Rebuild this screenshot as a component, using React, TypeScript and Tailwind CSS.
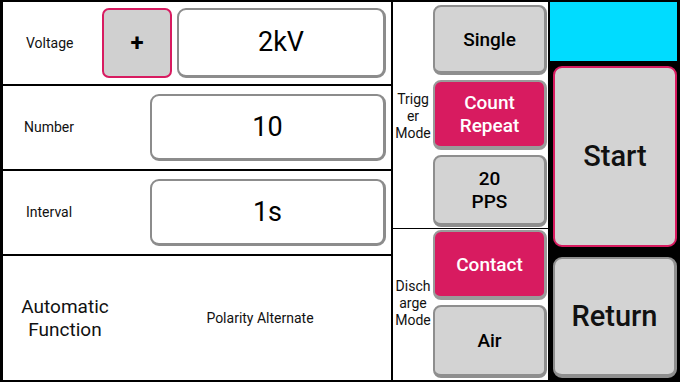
import React from 'react';

const font = { fontFamily: 'Roboto, "Noto Sans", sans-serif' };

function ValueBox({ value }: { value: string }) {
    return (
        <div className="flex-1 h-full flex items-center justify-center rounded-[9px] border-2 border-[#8c8c8c] border-b-[3px] border-r-[3px] bg-white text-[27px] text-black">
            {value}
        </div>
    );
}

function ModeButton({ label, active = false, className = '' }: { label: React.ReactNode; active?: boolean; className?: string }) {
    return (
        <div
            className={`flex items-center justify-center text-center rounded-[8px] border-2 border-b-[4px] border-r-[3px] text-[19px] font-medium leading-[23px] ${
                active ? 'bg-[#d81b60] text-white border-[#9a9a9a]' : 'bg-[#d3d3d3] text-black border-[#8e8e8e]'
            } ${className}`}
        >
            {label}
        </div>
    );
}

export default function App() {
    return (
        <div className="w-[680px] h-[382px] bg-black flex overflow-hidden" style={font}>
            {/* Settings panel */}
            <div className="w-[392px] h-full pl-[3px] pr-[1px] py-[2px] flex flex-col gap-[2px]">
                <div className="h-[82px] bg-white flex items-center pl-[23px] pr-[5px] py-[6px]">
                    <span className="w-[76px] text-[14px] text-[#111]">Voltage</span>
                    <div className="w-[70px] h-full flex items-center justify-center rounded-[7px] border-2 border-[#d81b60] bg-[#d0d0d0] text-[24px] font-bold text-black">
                        +
                    </div>
                    <div className="w-[5px]" />
                    <ValueBox value="2kV" />
                </div>
                <div className="h-[83px] bg-white flex items-center pl-[21px] pr-[5px] py-[8px]">
                    <span className="w-[126px] text-[14px] text-[#111]">Number</span>
                    <ValueBox value="10" />
                </div>
                <div className="h-[83px] bg-white flex items-center pl-[23px] pr-[5px] py-[8px]">
                    <span className="w-[124px] text-[14px] text-[#111]">Interval</span>
                    <ValueBox value="1s" />
                </div>
                <div className="flex-1 bg-white flex items-center">
                    <div className="w-[124px] text-center text-[19px] leading-[23px] text-[#111]">
                        Automatic
                        <br />
                        Function
                    </div>
                    <div className="flex-1 text-center text-[14px] text-[#111] pl-[2px]">Polarity Alternate</div>
                </div>
            </div>

            {/* Mode column */}
            <div className="w-[156px] h-full bg-white border-l border-black flex flex-col py-[2px] border-y-2 border-y-black">
                <div className="h-[225px] flex border-b border-black">
                    <div className="w-[40px] flex items-center justify-center text-center text-[14px] leading-[17px] text-[#111]">
                        Trigg
                        <br />
                        er
                        <br />
                        Mode
                    </div>
                    <div className="flex-1 flex flex-col gap-[5px] pt-[1px] pr-[1px] pb-[1px]">
                        <ModeButton label="Single" className="h-[70px]" />
                        <ModeButton label={<>Count<br />Repeat</>} active className="h-[70px]" />
                        <ModeButton label={<>20<br />PPS</>} className="flex-1" />
                    </div>
                </div>
                <div className="flex-1 flex">
                    <div className="w-[40px] flex items-center justify-center text-center text-[14px] leading-[17px] text-[#111]">
                        Disch
                        <br />
                        arge
                        <br />
                        Mode
                    </div>
                    <div className="flex-1 flex flex-col gap-[5px] pt-[1px] pr-[1px]">
                        <ModeButton label="Contact" active className="h-[70px]" />
                        <ModeButton label="Air" className="flex-1" />
                    </div>
                </div>
            </div>

            {/* Action column */}
            <div className="flex-1 h-full flex flex-col pl-[2px] pr-[3px] pt-[2px] pb-[4px]">
                <div className="h-[59px] bg-[#00dcff]" />
                <div className="flex-1 flex flex-col gap-[10px] pl-[3px] pt-[5px]">
                    <div className="h-[181px] flex items-center justify-center rounded-[9px] border-2 border-[#d81b60] bg-[#d3d3d3] text-[29px] font-medium text-[#111]">
                        Start
                    </div>
                    <div className="flex-1 flex items-center justify-center rounded-[9px] border-2 border-b-[4px] border-r-[3px] border-[#8e8e8e] bg-[#d3d3d3] text-[29px] font-medium text-[#111]">
                        Return
                    </div>
                </div>
            </div>
        </div>
    );
}
